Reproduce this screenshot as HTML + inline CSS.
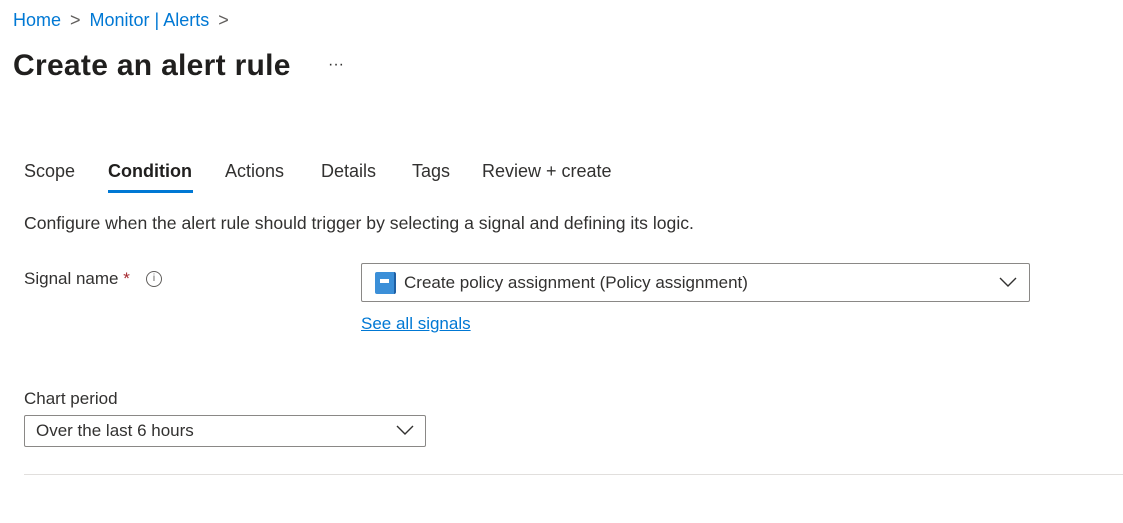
<!DOCTYPE html>
<html><head><meta charset="utf-8"><style>
body{margin:0;width:1123px;height:523px;background:#fff;font-family:"Liberation Sans",sans-serif;color:#323130;position:relative;overflow:hidden}
.a{position:absolute;white-space:nowrap}
.bc{top:10px;left:13px;font-size:18px;color:#0078d4}
.bc span{color:#605e5c;margin:0 9px}
.title{top:49px;left:13px;font-size:30px;font-weight:bold;color:#201f1e;letter-spacing:0.3px}
.tab{top:161px;font-size:18px;color:#323130}
.dd{border:1px solid #8a8886;border-radius:2px;box-sizing:border-box}
</style></head><body>
<div class="a bc">Home<span>&gt;</span>Monitor | Alerts<span>&gt;</span></div>
<div class="a title">Create an alert rule</div>
<div class="a" style="top:56px;left:328px;font-size:16px;color:#323130">···</div>
<div class="a tab" style="left:24px">Scope</div>
<div class="a tab" style="left:108px;font-weight:bold;color:#201f1e">Condition</div>
<div class="a" style="left:108px;top:190px;width:85px;height:3px;background:#0078d4"></div>
<div class="a tab" style="left:225px">Actions</div>
<div class="a tab" style="left:321px">Details</div>
<div class="a tab" style="left:412px">Tags</div>
<div class="a tab" style="left:482px">Review + create</div>
<div class="a" style="top:213px;left:24px;font-size:17.6px">Configure when the alert rule should trigger by selecting a signal and defining its logic.</div>
<div class="a" style="top:269px;left:24px;font-size:17px">Signal name <span style="color:#a4262c">*</span></div>
<div class="a" style="top:271px;left:146px;width:14px;height:14px;border:1px solid #605e5c;border-radius:50%;font-size:10px;text-align:center;line-height:14px;color:#605e5c">i</div>
<div class="a dd" style="left:361px;top:263px;width:669px;height:39px"></div>
<div class="a" style="left:375px;top:272px;width:19px;height:22px;background:#3b8fd8;border-radius:2px;border-right:2px solid #1e5fa3"><div style="position:absolute;left:5px;top:7px;width:9px;height:4px;background:#fff"></div></div>
<div class="a" style="top:273px;left:404px;font-size:17px;color:#323130">Create policy assignment (Policy assignment)</div>
<svg class="a" style="left:999px;top:276px" width="18" height="12"><path d="M1 2 L9 10 L17 2" fill="none" stroke="#323130" stroke-width="1.4"/></svg>
<div class="a" style="top:314px;left:361px;font-size:17px;color:#0078d4;text-decoration:underline">See all signals</div>
<div class="a" style="top:389px;left:24px;font-size:17px">Chart period</div>
<div class="a dd" style="left:24px;top:415px;width:402px;height:32px"></div>
<div class="a" style="top:421px;left:36px;font-size:17px">Over the last 6 hours</div>
<svg class="a" style="left:396px;top:424px" width="18" height="12"><path d="M1 2 L9 10 L17 2" fill="none" stroke="#323130" stroke-width="1.4"/></svg>
<div class="a" style="left:24px;top:474px;width:1099px;height:1px;background:#e1dfdd"></div>
</body></html>
